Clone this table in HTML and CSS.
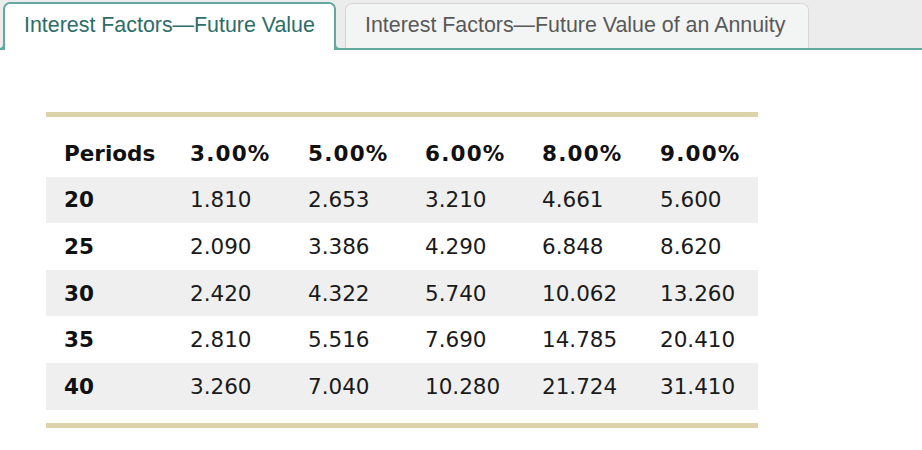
FILE: index.html
```html
<!DOCTYPE html>
<html>
<head>
<meta charset="utf-8">
<link rel="stylesheet" href="styles.css">
</head>
<body>
<div class="tabbar">
  <div class="tab tab-active">Interest Factors—Future Value</div>
  <div class="tab tab-inactive">Interest Factors—Future Value of an Annuity</div>
</div>
<div class="content">
  <div class="table-wrap">
    <table class="factors">
      <colgroup>
        <col class="c0"><col class="c1"><col class="c2"><col class="c3"><col class="c4"><col class="c5">
      </colgroup>
      <thead>
        <tr><th>Periods</th><th class="pct">3.00%</th><th class="pct">5.00%</th><th class="pct">6.00%</th><th class="pct">8.00%</th><th class="pct">9.00%</th></tr>
      </thead>
      <tbody>
        <tr class="shade"><th>20</th><td>1.810</td><td>2.653</td><td>3.210</td><td>4.661</td><td>5.600</td></tr>
        <tr><th>25</th><td>2.090</td><td>3.386</td><td>4.290</td><td>6.848</td><td>8.620</td></tr>
        <tr class="shade"><th>30</th><td>2.420</td><td>4.322</td><td>5.740</td><td>10.062</td><td>13.260</td></tr>
        <tr><th>35</th><td>2.810</td><td>5.516</td><td>7.690</td><td>14.785</td><td>20.410</td></tr>
        <tr class="shade"><th>40</th><td>3.260</td><td>7.040</td><td>10.280</td><td>21.724</td><td>31.410</td></tr>
      </tbody>
    </table>
  </div>
</div>
</body>
</html>
```
FILE: styles.css
```css
html, body {
  margin: 0;
  padding: 0;
  background: #ffffff;
}
.tabbar {
  display: flex;
  align-items: flex-end;
  gap: 9px;
  height: 46px;
  padding: 2px 0 0 3px;
  background: #ececec;
  border-bottom: 2px solid #64a8a2;
  font-family: "Liberation Sans", Arial, sans-serif;
  font-size: 21.4px;
}
.tab {
  box-sizing: border-box;
  display: flex;
  align-items: center;
  padding: 0 19px;
  border-radius: 7px 7px 0 0;
  white-space: nowrap;
}
.tab-active {
  position: relative;
  height: 48px;
  margin-bottom: -2px;
  padding-bottom: 4px;
  width: 333px;
  background: #ffffff;
  color: #2c6d68;
  border: 2px solid #64a8a2;
  border-bottom: none;
}
.tab-active::before,
.tab-active::after {
  content: "";
  position: absolute;
  bottom: 0;
  width: 6px;
  height: 6px;
  border-bottom: 2px solid #64a8a2;
}
.tab-active::before {
  left: -8px;
  border-right: 2px solid #64a8a2;
  border-bottom-right-radius: 6px;
}
.tab-active::after {
  right: -8px;
  border-left: 2px solid #64a8a2;
  border-bottom-left-radius: 6px;
}
.tab-inactive {
  height: 45px;
  width: 464px;
  padding-bottom: 2px;
  background: #f3f4f4;
  color: #595959;
  border: 1px solid #d6d6d6;
  border-bottom: none;
}
.content {
  padding: 62px 0 0 46px;
}
.table-wrap {
  width: 712px;
  border-top: 5px solid #ddd3ab;
  border-bottom: 5px solid #ddd3ab;
  padding: 13px 0;
}
.factors {
  width: 712px;
  border-collapse: collapse;
  table-layout: fixed;
  font-family: "DejaVu Sans", Verdana, sans-serif;
  font-size: 21.5px;
  color: #1a1a1a;
}
.c0 { width: 126px; }
.c1 { width: 118px; }
.c2 { width: 117px; }
.c3 { width: 117px; }
.c4 { width: 118px; }
.c5 { width: 116px; }
.factors tr {
  height: 46.6px;
}
.factors th,
.factors td {
  padding: 0 0 0 18px;
  text-align: left;
  white-space: nowrap;
}
.factors th {
  font-weight: bold;
  color: #111;
}
.factors .pct {
  letter-spacing: 1.2px;
}
.factors td {
  font-weight: normal;
}
.factors .shade {
  background: #efefef;
}
```
